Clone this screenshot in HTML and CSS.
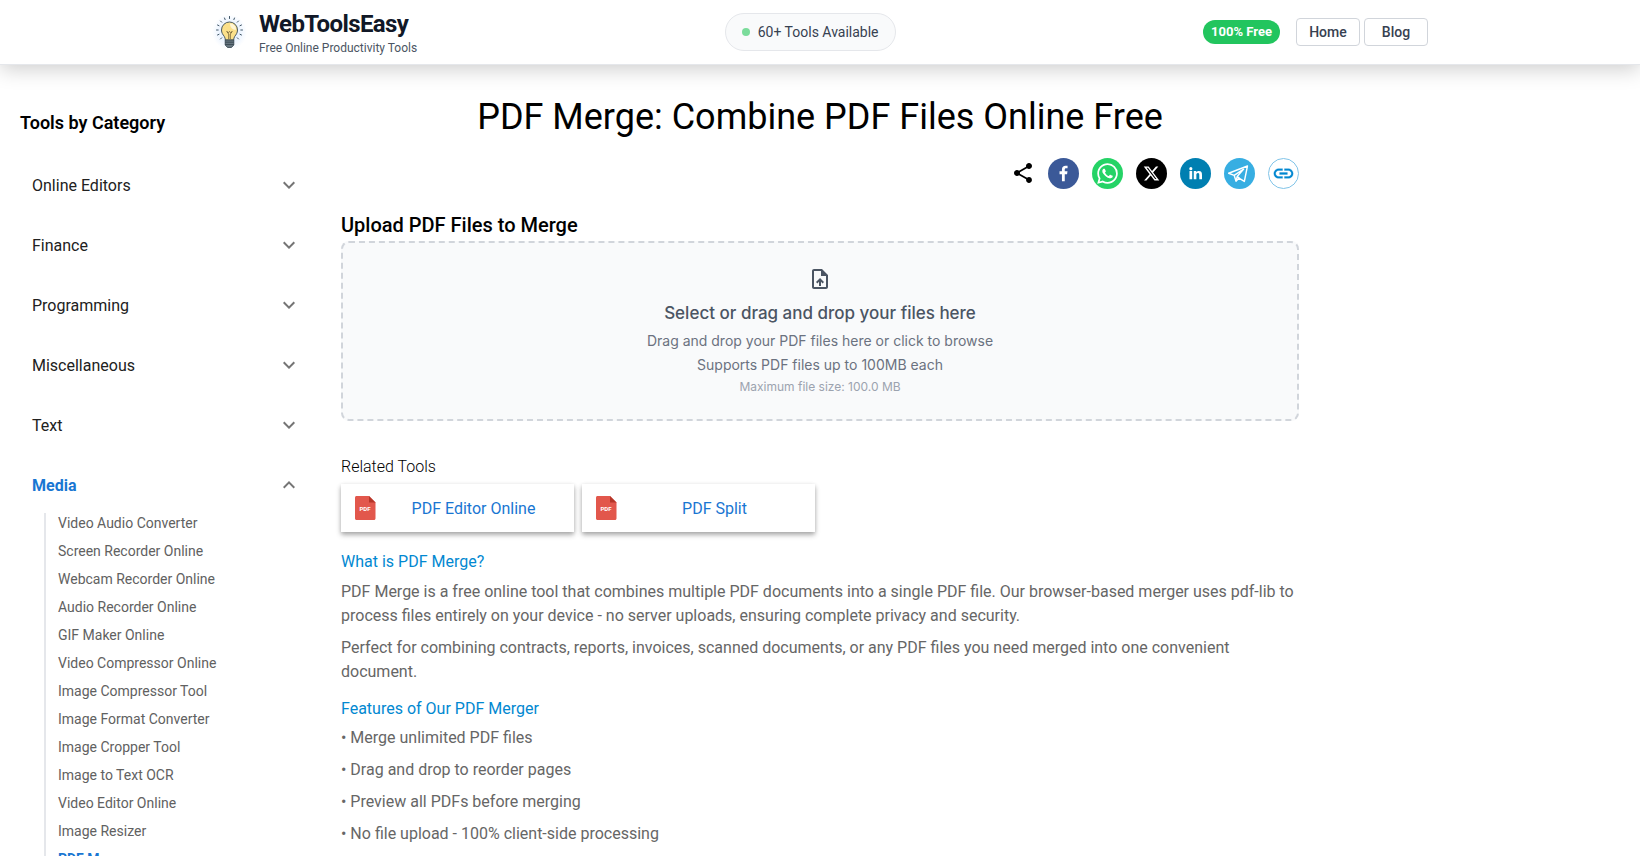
FILE: index.html
```html
<!DOCTYPE html>
<html lang="en">
<head>
    <meta charset="UTF-8">
    <meta name="viewport" content="width=device-width, initial-scale=1.0">
    <title>PDF Merge: Combine PDF Files Online Free | WebToolsEasy</title>
    <link rel="stylesheet" href="styles.css">
</head>
<body>
    <header class="header">
        <div class="header-inner">
            <a href="#" class="brand">
                <svg class="brand-icon" viewBox="0 0 35 35" aria-hidden="true">
                    <defs>
                        <radialGradient id="glow">
                            <stop offset="0.5" stop-color="#e8f2ff"/>
                            <stop offset="1" stop-color="#e8f2ff" stop-opacity="0"/>
                        </radialGradient>
                    </defs>
                    <circle cx="17.500" cy="17" r="17.500" fill="url(#glow)"/>
                    <g stroke="#3f5566" stroke-width="1" stroke-linecap="round">
                        <path d="M17.500 1.500v2M12.500 3l.6 1.600M22.500 3l-.6 1.600M8.500 6l1.200 1.200M26.500 6l-1.200 1.200M5.500 10l1.500.7M29.500 10l-1.500.7M4.500 15h1.700M30.500 15h-1.700M5.500 20l1.500-.7M29.500 20l-1.500-.7M8.500 24l1.200-1.200M26.500 24l-1.200-1.200"/>
                    </g>
                    <path d="M17.500 7a8 8 0 0 0-8 8c0 3 1.500 4.700 2.700 6.300.8 1.200 1 2.200 1.100 3.700h8.400c.1-1.500.3-2.500 1.100-3.700 1.200-1.600 2.700-3.300 2.700-6.300a8 8 0 0 0-8-8z" fill="#fbe08a" stroke="#4b5a60" stroke-width="1"/>
                    <path d="M18 8.500c3.500 0 6 2.500 6 6-2 1-6-1-6-6z" fill="#fff6d6"/>
                    <path d="M16.700 24v-5l-2-2.500 2 1 .8-1 .8 1 2-1-2 2.500v5" fill="none" stroke="#6c5c33" stroke-width="0.800"/>
                    <path d="M13.200 25h8.600v5l-2.300 2.500h-4L13.200 30z" fill="#66757f" stroke="#34424c" stroke-width="0.800"/>
                    <path d="M13.200 27.200h8.600M13.200 29.500h8.600" stroke="#34424c" stroke-width="0.800"/>
                </svg>
                <span class="brand-text">
                    <span class="brand-name">WebToolsEasy</span>
                    <span class="brand-tagline">Free Online Productivity Tools</span>
                </span>
            </a>
            <div class="tools-pill"><span class="dot"></span>60+ Tools Available</div>
            <nav class="navbar">
                <span class="free-badge">100% Free</span>
                <div class="nav-links">
                    <a href="#">Home</a>
                    <a href="#">Blog</a>
                </div>
            </nav>
        </div>
    </header>

    <div class="page">
        <aside class="sidebar">
            <h2>Tools by Category</h2>
            <button type="button" class="category">Online Editors
                <svg viewBox="0 0 24 24"><path d="M16.590 8.590 12 13.170 7.410 8.590 6 10l6 6 6-6z"/></svg>
            </button>
            <button type="button" class="category">Finance
                <svg viewBox="0 0 24 24"><path d="M16.590 8.590 12 13.170 7.410 8.590 6 10l6 6 6-6z"/></svg>
            </button>
            <button type="button" class="category">Programming
                <svg viewBox="0 0 24 24"><path d="M16.590 8.590 12 13.170 7.410 8.590 6 10l6 6 6-6z"/></svg>
            </button>
            <button type="button" class="category">Miscellaneous
                <svg viewBox="0 0 24 24"><path d="M16.590 8.590 12 13.170 7.410 8.590 6 10l6 6 6-6z"/></svg>
            </button>
            <button type="button" class="category">Text
                <svg viewBox="0 0 24 24"><path d="M16.590 8.590 12 13.170 7.410 8.590 6 10l6 6 6-6z"/></svg>
            </button>
            <button type="button" class="category open" aria-expanded="true">Media
                <svg viewBox="0 0 24 24"><path d="M16.590 8.590 12 13.170 7.410 8.590 6 10l6 6 6-6z"/></svg>
            </button>
            <ul class="tool-list">
                <li><a href="#">Video Audio Converter</a></li>
                <li><a href="#">Screen Recorder Online</a></li>
                <li><a href="#">Webcam Recorder Online</a></li>
                <li><a href="#">Audio Recorder Online</a></li>
                <li><a href="#">GIF Maker Online</a></li>
                <li><a href="#">Video Compressor Online</a></li>
                <li><a href="#">Image Compressor Tool</a></li>
                <li><a href="#">Image Format Converter</a></li>
                <li><a href="#">Image Cropper Tool</a></li>
                <li><a href="#">Image to Text OCR</a></li>
                <li><a href="#">Video Editor Online</a></li>
                <li><a href="#">Image Resizer</a></li>
                <li><a href="#" class="active">PDF Merge</a></li>
            </ul>
        </aside>

        <main class="content">
            <h1>PDF Merge: Combine PDF Files Online Free</h1>

            <div class="share">
                <svg class="share-icon" viewBox="0 0 24 24" aria-hidden="true"><path d="M18 16.080c-.76 0-1.440.3-1.960.77L8.910 12.700c.05-.23.09-.46.09-.7s-.04-.47-.09-.7l7.050-4.110c.54.5 1.250.81 2.040.81 1.660 0 3-1.340 3-3s-1.340-3-3-3-3 1.340-3 3c0 .24.04.47.09.7L8.040 9.810C7.500 9.310 6.790 9 6 9c-1.660 0-3 1.340-3 3s1.340 3 3 3c.79 0 1.500-.31 2.040-.81l7.120 4.160c-.05.21-.08.43-.08.65 0 1.610 1.310 2.920 2.920 2.920s2.920-1.310 2.920-2.920-1.310-2.920-2.920-2.920z"/></svg>
                <button type="button" class="facebook" aria-label="Share on Facebook">
                    <svg viewBox="0 0 32 32"><path d="M17.300 24v-7.300h2.400l.4-2.900h-2.800V12c0-.8.200-1.400 1.400-1.400h1.500V8.100C19.900 8.100 19.100 8 18.100 8c-2.200 0-3.700 1.300-3.700 3.800v2h-2.500v2.900h2.500V24z" fill="#fff"/></svg>
                </button>
                <button type="button" class="whatsapp" aria-label="Share on WhatsApp">
                    <svg viewBox="-6 -6 36 36"><path d="M17.472 14.382c-.297-.149-1.758-.867-2.030-.967-.273-.099-.471-.148-.67.15-.197.297-.767.966-.94 1.164-.173.199-.347.223-.644.075-.297-.15-1.255-.463-2.390-1.475-.883-.788-1.480-1.761-1.653-2.059-.173-.297-.018-.458.13-.606.134-.133.298-.347.446-.52.149-.174.198-.298.298-.497.099-.198.05-.371-.025-.52-.075-.149-.669-1.612-.916-2.207-.242-.579-.487-.5-.669-.51-.173-.008-.371-.01-.57-.01-.198 0-.52.074-.792.372-.272.297-1.040 1.016-1.040 2.479 0 1.462 1.065 2.875 1.213 3.074.149.198 2.096 3.200 5.077 4.487.709.306 1.262.489 1.694.625.712.227 1.360.195 1.871.118.571-.085 1.758-.719 2.006-1.413.248-.694.248-1.289.173-1.413-.074-.124-.272-.198-.57-.347m-5.421 7.403h-.004a9.870 9.870 0 0 1-5.031-1.378l-.361-.214-3.741.982.998-3.648-.235-.374a9.860 9.860 0 0 1-1.510-5.260c.001-5.450 4.436-9.884 9.888-9.884 2.640 0 5.122 1.030 6.988 2.898a9.825 9.825 0 0 1 2.893 6.994c-.003 5.450-4.437 9.884-9.885 9.884m8.413-18.297A11.815 11.815 0 0 0 12.050 0C5.495 0 .16 5.335.157 11.892c0 2.096.547 4.142 1.588 5.945L.057 24l6.305-1.654a11.882 11.882 0 0 0 5.683 1.448h.005c6.554 0 11.890-5.335 11.893-11.893a11.821 11.821 0 0 0-3.480-8.413z" fill="#fff"/></svg>
                </button>
                <button type="button" class="twitter" aria-label="Share on X">
                    <svg viewBox="-12 -12 48 48"><path d="M18.901 1.153h3.680l-8.040 9.190L24 22.846h-7.406l-5.800-7.584-6.638 7.584H.474l8.600-9.830L0 1.154h7.594l5.243 6.932zM17.610 20.644h2.039L6.486 3.240H4.298z" fill="#fff"/></svg>
                </button>
                <button type="button" class="linkedin" aria-label="Share on LinkedIn">
                    <svg viewBox="0 0 32 32"><circle cx="11.200" cy="11" r="1.600" fill="#fff"/><path d="M9.800 13.500h2.800V22H9.800zM14.200 13.500h2.600v1.200c.4-.7 1.300-1.400 2.600-1.400 2.700 0 3.300 1.700 3.300 4V22h-2.800v-4.200c0-1 0-2.200-1.400-2.200s-1.600 1.100-1.600 2.200V22h-2.700z" fill="#fff"/></svg>
                </button>
                <button type="button" class="telegram" aria-label="Share on Telegram">
                    <svg viewBox="0 0 32 32" fill="none" stroke="#fff" stroke-width="1.500" stroke-linejoin="round"><path d="M24.200 8.300 4.800 15.700l5.700 2.200 1.900 6 3-3.200 5.600 3.500z"/><path d="M10.500 17.900 20.300 11.500l-6.700 7.700-1.200 4.700M13.600 19.200l2.200 1.600"/></svg>
                </button>
                <button type="button" class="copy" aria-label="Copy link">
                    <svg viewBox="1 1 30 30"><path d="M7.900 16c0-1.710 1.390-3.100 3.100-3.100h4V11h-4c-2.760 0-5 2.240-5 5s2.240 5 5 5h4v-1.900h-4c-1.710 0-3.100-1.390-3.100-3.100zM12 17h8v-2h-8zm9-6h-4v1.900h4c1.710 0 3.100 1.390 3.100 3.100s-1.390 3.100-3.100 3.100h-4V21h4c2.760 0 5-2.240 5-5s-2.240-5-5-5z" fill="#0288d1" stroke="#0288d1" stroke-width="0.300"/></svg>
                </button>
            </div>

            <h2>Upload PDF Files to Merge</h2>
            <label class="dropzone" for="pdf-files">
                <input type="file" id="pdf-files" accept="application/pdf" multiple>
                <svg viewBox="0 0 24 24" aria-hidden="true"><path d="M14 2H6c-1.100 0-1.990.9-1.990 2L4 20c0 1.100.89 2 1.990 2H18c1.100 0 2-.9 2-2V8l-6-6zm4 18H6V4h7v5h5v11zM8 15.010l1.410 1.410L11 14.840V19h2v-4.160l1.590 1.590L16 15.010 12.010 11 8 15.010z"/></svg>
                <span class="dropzone-title">Select or drag and drop your files here</span>
                <span class="dropzone-text">Drag and drop your PDF files here or click to browse</span>
                <span class="dropzone-text">Supports PDF files up to 100MB each</span>
                <span class="dropzone-note">Maximum file size: 100.0 MB</span>
            </label>

            <h3 class="related-title">Related Tools</h3>
            <div class="related">
                <a href="#" class="related-card">
                    <svg viewBox="0 0 24 24" aria-hidden="true">
                        <path d="M3.500 0H16l6.500 6.500v16c0 .8-.7 1.500-1.500 1.500H3.500C2.700 24 2 23.300 2 22.500v-21C2 .7 2.700 0 3.500 0z" fill="#e2574c"/>
                        <path d="M16 0l6.500 6.500H16z" fill="#b53629"/>
                        <text x="12" y="15" text-anchor="middle">PDF</text>
                    </svg>
                    <span>PDF Editor Online</span>
                </a>
                <a href="#" class="related-card">
                    <svg viewBox="0 0 24 24" aria-hidden="true">
                        <path d="M3.500 0H16l6.500 6.500v16c0 .8-.7 1.500-1.500 1.500H3.500C2.700 24 2 23.300 2 22.500v-21C2 .7 2.700 0 3.500 0z" fill="#e2574c"/>
                        <path d="M16 0l6.500 6.500H16z" fill="#b53629"/>
                        <text x="12" y="15" text-anchor="middle">PDF</text>
                    </svg>
                    <span>PDF Split</span>
                </a>
            </div>

            <section class="info">
                <h3>What is PDF Merge?</h3>
                <p>PDF Merge is a free online tool that combines multiple PDF documents into a single PDF file. Our browser-based merger uses pdf-lib to process files entirely on your device - no server uploads, ensuring complete privacy and security.</p>
                <p>Perfect for combining contracts, reports, invoices, scanned documents, or any PDF files you need merged into one convenient document.</p>
                <h3>Features of Our PDF Merger</h3>
                <ul>
                    <li>• Merge unlimited PDF files</li>
                    <li>• Drag and drop to reorder pages</li>
                    <li>• Preview all PDFs before merging</li>
                    <li>• No file upload - 100% client-side processing</li>
                </ul>
            </section>
        </main>
    </div>
</body>
</html>
```
FILE: styles.css
```css
* {
    box-sizing: border-box;
}

body {
    font-family: Roboto, Arial, sans-serif;
    margin: 0;
    background-color: #fff;
    color: #000;
}

h1, h2, h3, p, ul {
    margin: 0;
    padding: 0;
}

ul {
    list-style: none;
}

a {
    text-decoration: none;
}

button {
    font-family: inherit;
    border: none;
    background: none;
    padding: 0;
    cursor: pointer;
}

.header {
    background: #fff;
    border-bottom: 1px solid #e5e7eb;
    box-shadow: 0 4px 20px rgba(0,0,0,0.2);
}

.header-inner {
    max-width: 1280px;
    height: 64px;
    margin: 0 auto;
    padding: 0 32px;
    display: flex;
    justify-content: space-between;
    align-items: center;
}

.brand {
    display: flex;
    align-items: center;
    gap: 12px;
}

.brand-icon {
    width: 35px;
    height: 35px;
}

.brand-text {
    display: flex;
    flex-direction: column;
}

.brand-name {
    font-size: 24px;
    line-height: 32px;
    font-weight: 700;
    letter-spacing: -0.025em;
    color: #111827;
}

.brand-tagline {
    font-size: 12px;
    line-height: 16px;
    color: #4b5563;
}

.tools-pill {
    display: flex;
    align-items: center;
    gap: 8px;
    padding: 8px 16px;
    border: 1px solid #e5e7eb;
    border-radius: 20px;
    background: #f9fafb;
    font-size: 14px;
    line-height: 20px;
    color: #374151;
}

.dot {
    width: 8px;
    height: 8px;
    border-radius: 50%;
    background: #7bdc9b;
}

.navbar {
    display: flex;
    align-items: center;
    gap: 16px;
}

.free-badge {
    padding: 4px 8px;
    border-radius: 12px;
    background: #22c55e;
    color: #fff;
    font-size: 13px;
    line-height: 16px;
    font-weight: 700;
}

.nav-links {
    display: flex;
    gap: 4px;
}

.nav-links a {
    width: 64px;
    border: 1px solid #d1d5db;
    border-radius: 4px;
    font-size: 14px;
    line-height: 26px;
    font-weight: 500;
    text-align: center;
    color: #374151;
}

.page {
    display: grid;
    grid-template-columns: 281px minmax(0, 1fr) 281px;
    gap: 40px;
    padding: 0 20px;
}

.sidebar {
    padding-top: 46px;
}

.sidebar h2 {
    font-size: 18px;
    line-height: 24px;
    font-weight: 600;
    margin-bottom: 20px;
}

.category {
    display: flex;
    justify-content: space-between;
    align-items: center;
    width: 100%;
    height: 60px;
    padding: 0 0 0 12px;
    font-size: 16px;
    color: #212121;
}

.category svg {
    width: 24px;
    height: 24px;
    fill: #757575;
}

.category.open {
    font-weight: 700;
    color: #1976d2;
}

.category.open svg {
    transform: rotate(180deg);
}

.tool-list {
    margin-top: -2px;
    margin-left: 24px;
    padding-left: 12px;
    border-left: 2px solid #e5e7eb;
}

.tool-list a {
    display: block;
    font-size: 14px;
    line-height: 20px;
    padding-bottom: 8px;
    color: #616161;
}

.tool-list a.active {
    font-weight: 700;
    color: #1976d2;
}

.content {
    padding: 32px 0 24px;
}

.content h1 {
    font-size: 36px;
    line-height: 40px;
    font-weight: 400;
    text-align: center;
}

.share {
    display: flex;
    justify-content: flex-end;
    align-items: center;
    gap: 13px;
    height: 32px;
    margin: 20px 0;
}

.share-icon {
    width: 24px;
    height: 24px;
}

.share button {
    width: 31px;
    height: 31px;
    border-radius: 50%;
    overflow: hidden;
}

.share button svg {
    display: block;
    width: 100%;
    height: 100%;
}

.share .facebook {
    background: #3b5998;
}

.share .whatsapp {
    background: #25d366;
}

.share .twitter {
    background: #000;
}

.share .linkedin {
    background: #007fb1;
}

.share .telegram {
    background: #37aee2;
}

.share .copy {
    border: 1px solid #81c4e8;
}

.content h2 {
    font-size: 20px;
    line-height: 32px;
    font-weight: 500;
}

.dropzone {
    display: flex;
    flex-direction: column;
    align-items: center;
    gap: 4px;
    padding: 24px;
    border: 2px dashed #d1d5db;
    border-radius: 8px;
    background: #f9fafb;
    font-family: Inter, sans-serif;
    cursor: pointer;
}

.dropzone input {
    display: none;
}

.dropzone svg {
    width: 24px;
    height: 24px;
    margin-bottom: 4px;
    fill: #4b5563;
}

.dropzone-title {
    font-size: 17px;
    line-height: 28px;
    font-weight: 500;
    color: #4b5563;
}

.dropzone-text {
    font-size: 14px;
    line-height: 20px;
    color: #6b7280;
}

.dropzone-note {
    font-size: 12px;
    line-height: 16px;
    color: #9ca3af;
}

.related-title {
    margin-top: 32px;
    font-size: 16px;
    line-height: 28px;
    font-weight: 300;
}

.related {
    display: flex;
    gap: 8px;
    margin-top: 3px;
}

.related-card {
    display: flex;
    align-items: center;
    width: 233px;
    height: 48px;
    padding: 0 4px 0 12px;
    background: #fff;
    box-shadow: 0 3px 5px rgba(0,0,0,0.3), 0 1px 4px rgba(0,0,0,0.1);
    color: #1976d2;
    font-size: 16px;
}

.related-card svg {
    width: 24px;
    height: 24px;
}

.related-card text {
    font-size: 6px;
    font-weight: 700;
    fill: #fff;
}

.related-card span {
    flex: 1;
    text-align: center;
}

.info {
    margin-top: 18px;
    font-size: 16px;
    line-height: 24px;
    color: #666;
}

.info h3 {
    margin-bottom: 6px;
    font-size: 16px;
    line-height: 24px;
    font-weight: 400;
    color: #0288d1;
}

.info p {
    margin-bottom: 8px;
}

.info p + h3 {
    margin-top: 13px;
    margin-bottom: 5px;
}

.info li {
    margin-bottom: 8px;
}
```
